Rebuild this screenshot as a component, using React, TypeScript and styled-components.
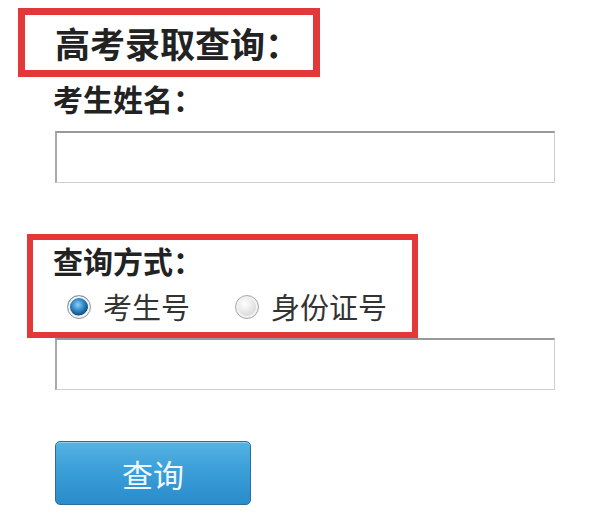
import React, { useState } from "react";
import styled, { createGlobalStyle } from "styled-components";

const GlobalStyle = createGlobalStyle`
  html, body {
    margin: 0;
    padding: 0;
    background: #ffffff;
  }
  body {
    font-family: "Noto Sans CJK SC", "Noto Sans", sans-serif;
    color: #222;
  }
`;

const Page = styled.div`
  display: flex;
  flex-direction: column;
  align-items: flex-start;
  padding-top: 8px;
  width: 597px;
  height: 525px;
  box-sizing: border-box;
`;

const TitleBox = styled.div`
  margin-left: 18px;
  width: 302px;
  height: 69px;
  box-sizing: border-box;
  border: 7px solid #e3383a;
  display: flex;
  align-items: center;
  padding-left: 30px;
`;

const Title = styled.h1`
  margin: 0;
  font-size: 35px;
  line-height: 1;
  font-weight: 700;
  color: #222;
`;

const Label = styled.div<{ $top?: number }>`
  margin-top: ${(p) => p.$top ?? 0}px;
  margin-left: 53px;
  font-size: 30px;
  line-height: 1;
  font-weight: 700;
  color: #222;
`;

const TextInput = styled.input`
  display: block;
  margin-left: 55px;
  width: 500px;
  height: 52px;
  box-sizing: border-box;
  border: 1px solid #cfcfcf;
  border-top: 2px solid #999;
  border-left: 2px solid #a9a9a9;
  background: #fff;
  outline: none;
  font-size: 22px;
  padding: 0 8px;
`;

const ModeBox = styled.div`
  margin-top: 51px;
  margin-left: 27px;
  width: 391px;
  height: 104px;
  box-sizing: border-box;
  border: 6px solid #e3383a;
  padding: 5px 0 0 20px;
  display: flex;
  flex-direction: column;
  gap: 17px;
`;

const ModeLabel = styled.div`
  font-size: 30px;
  line-height: 1;
  font-weight: 700;
  color: #222;
`;

const RadioRow = styled.div`
  display: flex;
  align-items: center;
  padding-left: 14px;
  gap: 45px;
`;

const Option = styled.label`
  display: flex;
  align-items: center;
  gap: 12px;
  font-size: 29px;
  line-height: 1;
  color: #333;
  cursor: pointer;
`;

const Radio = styled.input`
  appearance: none;
  margin: 0;
  width: 24px;
  height: 24px;
  border-radius: 50%;
  border: 1px solid #a8a8a8;
  background: radial-gradient(circle at 40% 35%, #ffffff 0%, #e6e6e6 45%, #c4c4c4 100%);
  box-shadow: inset 0 0 0 2px #f2f2f2;
  cursor: pointer;

  &:checked {
    border-color: #8a9aa8;
    background:
      radial-gradient(circle at 45% 40%, #8fd0f5 0%, #2a86c4 35%, #11507e 58%, transparent 62%),
      radial-gradient(circle at 50% 50%, #f4f4f4 0%, #dcdcdc 100%);
  }
`;

const QueryButton = styled.button`
  margin-top: 51px;
  margin-left: 55px;
  width: 196px;
  height: 64px;
  box-sizing: border-box;
  border: 1px solid #2b6f98;
  border-radius: 5px;
  background: linear-gradient(to bottom, #56b3e3 0%, #3b9fd8 45%, #2a8ccc 100%);
  box-shadow: inset 0 1px 0 rgba(255, 255, 255, 0.35);
  color: #eef8ff;
  font-family: "Noto Sans CJK SC", sans-serif;
  font-size: 31px;
  line-height: 1;
  cursor: pointer;
`;

export default function App() {
  const [mode, setMode] = useState("exam");

  return (
    <Page>
      <GlobalStyle />
      <TitleBox>
        <Title>高考录取查询：</Title>
      </TitleBox>
      <Label $top={6}>考生姓名：</Label>
      <TextInput style={{ marginTop: 18 }} type="text" />
      <ModeBox>
        <ModeLabel>查询方式：</ModeLabel>
        <RadioRow>
          <Option>
            <Radio
              type="radio"
              name="mode"
              checked={mode === "exam"}
              onChange={() => setMode("exam")}
            />
            考生号
          </Option>
          <Option>
            <Radio
              type="radio"
              name="mode"
              checked={mode === "id"}
              onChange={() => setMode("id")}
            />
            身份证号
          </Option>
        </RadioRow>
      </ModeBox>
      <TextInput type="text" />
      <QueryButton type="button">查询</QueryButton>
    </Page>
  );
}
